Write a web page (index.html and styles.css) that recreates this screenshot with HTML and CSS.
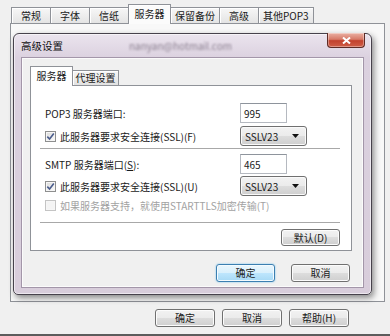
FILE: index.html
```html
<!DOCTYPE html>
<html lang="zh-CN">
<head>
  <meta charset="UTF-8" />
  <meta name="viewport" content="width=device-width, initial-scale=1.0" />
  <title>服务器 - 高级设置</title>
  <link rel="stylesheet" href="styles.css">
</head>
<body>
  <div class="window">
    <div class="tabs">
      <div class="tab">常规</div>
      <div class="tab">字体</div>
      <div class="tab">信纸</div>
      <div class="tab active">服务器</div>
      <div class="tab">保留备份</div>
      <div class="tab">高级</div>
      <div class="tab">其他POP3</div>
    </div>

    <div class="panel">
      <div class="dialog">
        <div class="titlebar">
          <span class="title">高级设置</span>
          <span class="glass-text">nanyan@hotmail.com</span>
          <div class="close-btn">
            <svg width="9" height="7" viewBox="0 0 9 7"><path d="M1 0.5 L8 6.5 M8 0.5 L1 6.5" stroke="#fff" stroke-width="2" /></svg>
          </div>
        </div>

        <div class="client">
          <div class="subtabs">
            <div class="subtab active">服务器</div>
            <div class="subtab">代理设置</div>
          </div>

          <div class="subpanel">
            <div class="row">
              <span class="label">POP3 服务器端口:</span>
              <div class="input">995</div>
            </div>
            <div class="row">
              <label class="check-label"><span class="check on"><svg width="9" height="9" viewBox="0 0 9 9"><path d="M1.3 4.6 L3.6 7 L7.8 1.6" fill="none" stroke="#4a5c8c" stroke-width="1.6" /></svg></span>此服务器要求安全连接(SSL)(F)</label>
              <div class="select">SSLV23<svg width="7" height="4" viewBox="0 0 7 4"><path d="M0 0 H7 L3.5 4 Z" fill="#111" /></svg></div>
            </div>
            <div class="sep"></div>
            <div class="row">
              <span class="label">SMTP 服务器端口(<u>S</u>):</span>
              <div class="input">465</div>
            </div>
            <div class="row row-tight">
              <label class="check-label"><span class="check on"><svg width="9" height="9" viewBox="0 0 9 9"><path d="M1.3 4.6 L3.6 7 L7.8 1.6" fill="none" stroke="#4a5c8c" stroke-width="1.6" /></svg></span>此服务器要求安全连接(SSL)(U)</label>
              <div class="select">SSLV23<svg width="7" height="4" viewBox="0 0 7 4"><path d="M0 0 H7 L3.5 4 Z" fill="#111" /></svg></div>
            </div>
            <label class="check-label disabled"><span class="check"></span>如果服务器支持，就使用STARTTLS加密传输(T)</label>
            <div class="sep sep-low"></div>
            <div class="actions">
              <button class="btn">默认(D)</button>
            </div>
          </div>

          <div class="dlg-buttons">
            <button class="btn default">确定</button>
            <button class="btn">取消</button>
          </div>
        </div>
      </div>
    </div>

    <div class="bottom-buttons">
      <button class="btn wide">确定</button>
      <button class="btn wide">取消</button>
      <button class="btn wide">帮助(H)</button>
    </div>
  </div>
</body>
</html>
```
FILE: styles.css
```css
body {
  margin: 0;
  background: #f0f0f0;
  font-family: "Noto Sans CJK SC", "Noto Sans", sans-serif;
  font-size: 10px;
  color: #1a1a1a;
}
.window {
  width: 390px;
  height: 336px;
  box-sizing: border-box;
  padding-top: 4px;
  border-bottom: 2px solid #5c5c5c;
  overflow: hidden;
}

/* outer tab strip */
.tabs {
  display: flex;
  align-items: flex-end;
  height: 19px;
  margin-left: 11px;
  position: relative;
  z-index: 1;
}
.tab {
  height: 16px;
  min-width: 40px;
  box-sizing: border-box;
  padding: 0 4px;
  margin-left: -1px;
  border: 1px solid #8f9298;
  border-bottom: none;
  background: linear-gradient(#f7f7f7, #e4e4e4);
  box-shadow: inset 1px 1px 0 #fff;
  display: flex;
  align-items: center;
  justify-content: center;
  line-height: 1;
}
.tab:first-child {
  margin-left: 0;
}
.tab.active {
  height: 20px;
  min-width: 43px;
  margin-bottom: -1px;
  padding-bottom: 2px;
  background: #fbfbfb;
  position: relative;
  z-index: 2;
}
.panel {
  margin: 0 5px 0 10px;
  height: 279px;
  box-sizing: border-box;
  border: 1px solid #8f9298;
  background: #f8f8f8;
  padding: 9px 0 0 2px;
}

/* modal dialog */
.dialog {
  position: relative;
  width: 359px;
  height: 262px;
  box-sizing: border-box;
  border: 1px solid #47424c;
  border-radius: 6px 6px 5px 5px;
  background: linear-gradient(#ebe4ee, #dbd1df 24px, #d8cddb);
  box-shadow: 2px 3px 6px rgba(0, 0, 0, 0.45), inset 0 0 0 1px rgba(255, 255, 255, 0.55);
  padding: 0 7px 6px;
  display: flex;
  flex-direction: column;
}
.titlebar {
  height: 23px;
  display: flex;
  align-items: center;
}
.title {
  font-size: 10.5px;
  color: #111;
}
.glass-text {
  margin-left: 66px;
  color: #8c8191;
  filter: blur(1.3px);
}
.close-btn {
  position: absolute;
  top: -1px;
  right: 6px;
  width: 38px;
  height: 15px;
  box-sizing: border-box;
  border: 1px solid #5e2b25;
  border-top: none;
  border-radius: 0 0 4px 4px;
  background: linear-gradient(#eab0a4, #d77a68 45%, #c2412d 55%, #cf5e47);
  box-shadow: inset 0 0 0 1px rgba(255, 255, 255, 0.35);
  display: flex;
  align-items: center;
  justify-content: center;
}
.client {
  flex: 1;
  border: 1px solid #a396a9;
  box-shadow: inset 0 0 0 1px #fbfbfb;
  background: #f0f0f0;
  padding: 9px 0 0 8px;
  display: flex;
  flex-direction: column;
}

/* inner tabs */
.subtabs {
  display: flex;
  align-items: flex-end;
  height: 18px;
  position: relative;
  z-index: 1;
}
.subtab {
  width: 47px;
  height: 15px;
  box-sizing: border-box;
  border: 1px solid #8f9298;
  border-bottom: none;
  margin-left: -1px;
  background: linear-gradient(#f6f6f6, #e2e2e2);
  box-shadow: inset 1px 1px 0 #fff;
  display: flex;
  align-items: center;
  justify-content: center;
  line-height: 1;
}
.subtab.active {
  width: 43px;
  height: 20px;
  margin: 0 0 -1px 0;
  padding-bottom: 2px;
  background: #fff;
  position: relative;
  z-index: 2;
}
.subpanel {
  width: 322px;
  height: 166px;
  box-sizing: border-box;
  border: 1px solid #8f9298;
  background: #fff;
  padding: 17px 11px 0 9px;
}
.row {
  display: grid;
  grid-template-columns: 200px 67px;
  align-items: center;
  height: 20px;
}
.row + .row {
  margin-top: 3px;
}
.row.row-tight {
  margin-top: 2px;
}
.label {
  padding-left: 5px;
}
.check-label {
  display: flex;
  align-items: center;
  padding-left: 5px;
  height: 14px;
}
.check-label.disabled {
  margin-top: 2px;
  color: #a2a2a2;
}
.check {
  width: 11px;
  height: 11px;
  box-sizing: border-box;
  border: 1px solid #8e8f8f;
  background: linear-gradient(135deg, #dadada, #fcfcfc);
  box-shadow: inset 0 0 0 1px #f6f6f6;
  margin-right: 4px;
  display: flex;
  align-items: center;
  justify-content: center;
}
.disabled .check {
  border-color: #c4c4c4;
  background: #f4f4f4;
}
.input {
  width: 47px;
  height: 20px;
  box-sizing: border-box;
  border: 1px solid #b5b9c0;
  border-top-color: #8e949c;
  background: #fff;
  padding-left: 3px;
  display: flex;
  align-items: center;
}
.select {
  height: 20px;
  box-sizing: border-box;
  border: 1px solid #707070;
  border-radius: 3px;
  background: linear-gradient(#f2f2f2, #ebebeb 50%, #dddddd 50%, #cfcfcf);
  box-shadow: inset 0 0 0 1px #fafafa;
  padding: 0 7px 0 4px;
  display: flex;
  align-items: center;
  justify-content: space-between;
}
.sep {
  border-top: 1px solid #a8a8a8;
  border-bottom: 1px solid #fff;
  margin: 2px 0 4px;
}
.sep.sep-low {
  margin: 10px 0 5px;
}
.actions {
  display: flex;
  justify-content: flex-end;
}

/* buttons */
.btn {
  width: 59px;
  height: 17px;
  box-sizing: border-box;
  border: 1px solid #707070;
  border-radius: 3px;
  background: linear-gradient(#f2f2f2, #ebebeb 50%, #dddddd 50%, #cfcfcf);
  box-shadow: inset 0 0 0 1px #fcfcfc;
  font: inherit;
  color: #1a1a1a;
  padding: 0;
  line-height: 1;
}
.btn.default {
  border-color: #3c7fb1;
  background: linear-gradient(#eaf6fd, #d9f0fc 50%, #bee6fd 50%, #a7d9f5);
  box-shadow: inset 0 0 0 1px #f4fbff, 0 0 2px #6ec0ee;
}
.btn.wide {
  width: 60px;
  height: 18px;
}
.dlg-buttons {
  display: flex;
  justify-content: flex-end;
  gap: 16px;
  margin-top: 13px;
  padding-right: 13px;
}
.dlg-buttons .btn {
  height: 18px;
}
.bottom-buttons {
  display: flex;
  justify-content: flex-end;
  gap: 7px;
  margin-top: 7px;
  padding-right: 41px;
}
```
